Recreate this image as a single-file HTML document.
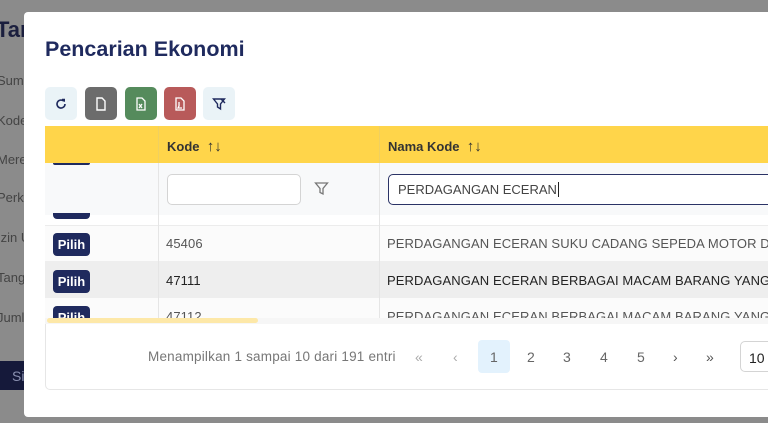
<!DOCTYPE html>
<html><head><meta charset="utf-8"><style>
*{margin:0;padding:0;box-sizing:border-box}
body{width:768px;height:423px;overflow:hidden;background:#8b8b8b;font-family:"Liberation Sans",sans-serif;position:relative}
.a{position:absolute}
.bgl{color:#444;font-size:13px;left:-3px}
.modal{left:24px;top:12px;width:760px;height:405px;background:#fff;border-radius:4px}
.tb{width:32px;height:33px;border-radius:5px;top:87px;display:flex;align-items:center;justify-content:center}
.th{font-weight:bold;font-size:13px;color:#333;top:138px}
.vl{width:1px;background:#e5e5e5}
.badge{left:53px;width:37px;height:23px;background:#1f2a5e;border-radius:4px;color:#fff;font-weight:bold;font-size:13px;display:flex;align-items:center;justify-content:center}
.td{font-size:13px;color:#555;letter-spacing:0.1px}
.pg{font-size:14px;color:#666;top:349px}
</style></head><body>
<div class="a" style="left:-4px;top:17px;font-size:22px;font-weight:bold;color:#1b1f3e">Tar</div>
<div class="a bgl" style="top:73px">Suml</div>
<div class="a bgl" style="top:113px">Kode</div>
<div class="a bgl" style="top:152px">Mere</div>
<div class="a bgl" style="top:190px">Perki</div>
<div class="a bgl" style="top:230px">Izin U</div>
<div class="a bgl" style="top:270px">Tang</div>
<div class="a bgl" style="top:310px">Juml</div>
<div class="a" style="left:0;top:361px;width:30px;height:29px;background:#15193a;color:#8a90b0;font-size:14px;padding:7px 0 0 12px">Si</div>

<div class="a modal"></div>
<div class="a" style="left:45px;top:37px;font-size:21.5px;font-weight:bold;color:#1f2a5e">Pencarian Ekonomi</div>

<div class="a tb" style="left:45px;background:#eaf3f7"><svg width="14" height="14" viewBox="0 0 14 14" fill="none" stroke="#1f2a5e" stroke-width="1.6"><path d="M11 7a4 4 0 1 1-1.5-3.1"/><path d="M8 2.5h2.2v2.3"/></svg></div>
<div class="a tb" style="left:85px;background:#6c6c6c"><svg width="12" height="14" viewBox="0 0 12 14" fill="none" stroke="#fff" stroke-width="1.4"><path d="M2 1h5l3 3v9H2z"/></svg></div>
<div class="a tb" style="left:125px;background:#558b5c"><svg width="12" height="14" viewBox="0 0 12 14" fill="none" stroke="#fff" stroke-width="1.3"><path d="M2 1h5l3 3v9H2z"/><path d="M4 7l3 4M7 7l-3 4"/></svg></div>
<div class="a tb" style="left:164px;background:#b85a5a"><svg width="12" height="14" viewBox="0 0 12 14" fill="none" stroke="#fff" stroke-width="1.3"><path d="M2 1h5l3 3v9H2z"/><path d="M5 5v4l-1 2h4"/></svg></div>
<div class="a tb" style="left:203px;background:#eaf3f7"><svg width="14" height="14" viewBox="0 0 14 14" fill="none" stroke="#1f2a5e" stroke-width="1.4"><path d="M1.5 2h11l-4 5v5l-3-2V7z"/><path d="M9 2l4 4"/></svg></div>

<div class="a" style="left:45px;top:163px;width:723px;height:52px;background:#f8f9fa"></div>
<div class="a" style="left:53px;top:163px;width:37px;height:2px;background:#1f2a5e;border-radius:0 0 3px 3px"></div>
<div class="a" style="left:45px;top:126px;width:723px;height:37px;background:#ffd54a"></div>
<div class="a th" style="left:167px">Kode &nbsp;<span style="font-weight:normal;font-size:15px">↑↓</span></div>
<div class="a th" style="left:388px">Nama Kode &nbsp;<span style="font-weight:normal;font-size:15px">↑↓</span></div>
<div class="a" style="left:167px;top:174px;width:134px;height:31px;background:#fff;border:1px solid #d4d4d4;border-radius:5px"></div>
<svg class="a" style="left:314px;top:181px" width="15" height="15" viewBox="0 0 15 15" fill="none" stroke="#777" stroke-width="1.3"><path d="M1.5 2h12l-4.5 5.5V13l-3-1.5V7.5z"/></svg>
<div class="a" style="left:388px;top:174px;width:390px;height:31px;background:#fff;border:1px solid #2b3366;border-radius:5px;font-size:13px;color:#444;padding:7px 0 0 9px">PERDAGANGAN ECERAN<span style="border-left:1px solid #222;margin-left:1px"></span></div>
<div class="a" style="left:45px;top:215px;width:723px;height:10px;background:#fff"></div>
<div class="a" style="left:53px;top:213px;width:37px;height:6px;background:#1f2a5e;border-radius:0 0 4px 4px"></div>
<div class="a" style="left:45px;top:225px;width:723px;height:36px;background:#fbfbfb;border-top:1px solid #ececec"></div>
<div class="a" style="left:45px;top:261px;width:723px;height:37px;background:#eeeeee"></div>
<div class="a" style="left:45px;top:298px;width:723px;height:20px;background:#fbfbfb;overflow:hidden">
 <div class="a badge" style="left:8px;top:8px">Pilih</div>
 <div class="a td" style="left:121px;top:11px">47112</div>
 <div class="a td" style="left:342px;top:11px;white-space:nowrap">PERDAGANGAN ECERAN BERBAGAI MACAM BARANG YANG U</div>
</div>
<div class="a vl" style="left:158px;top:163px;height:155px"></div>
<div class="a vl" style="left:379px;top:163px;height:155px"></div>
<div class="a" style="left:158px;top:126px;width:1px;height:37px;background:#f0d060"></div>
<div class="a" style="left:379px;top:126px;width:1px;height:37px;background:#f0d060"></div>
<div class="a badge" style="top:233px">Pilih</div>
<div class="a td" style="left:166px;top:236px">45406</div>
<div class="a td" style="left:387px;top:236px;white-space:nowrap">PERDAGANGAN ECERAN SUKU CADANG SEPEDA MOTOR DAN</div>
<div class="a badge" style="top:270px">Pilih</div>
<div class="a td" style="left:166px;top:273px;color:#222">47111</div>
<div class="a td" style="left:387px;top:273px;color:#222;white-space:nowrap">PERDAGANGAN ECERAN BERBAGAI MACAM BARANG YANG U</div>
<div class="a" style="left:45px;top:318px;width:723px;height:6px;background:#f6f6f6"></div>
<div class="a" style="left:47px;top:318px;width:211px;height:5px;background:#fde8a8;border-radius:3px"></div>
<div class="a" style="left:45px;top:324px;width:730px;height:66px;border:1px solid #e6e6e6;border-top:none;border-radius:0 0 5px 5px"></div>
<div class="a pg" style="left:148px;font-size:13.5px;top:349px;color:#777;letter-spacing:0.2px">Menampilkan 1 sampai 10 dari 191 entri</div>
<div class="a" style="left:478px;top:340px;width:32px;height:33px;background:#e3f2fd;border-radius:4px"></div>
<div class="a pg" style="left:415px;color:#aaa">«</div>
<div class="a pg" style="left:453px;color:#aaa">‹</div>
<div class="a pg" style="left:490px">1</div>
<div class="a pg" style="left:527px">2</div>
<div class="a pg" style="left:563px">3</div>
<div class="a pg" style="left:600px">4</div>
<div class="a pg" style="left:637px">5</div>
<div class="a pg" style="left:673px;color:#555">›</div>
<div class="a pg" style="left:706px;color:#555">»</div>
<div class="a" style="left:740px;top:341px;width:40px;height:31px;border:1px solid #d4d4d4;border-radius:5px;font-size:14px;color:#222;padding:8px 0 0 8px">10</div>
</body></html>
